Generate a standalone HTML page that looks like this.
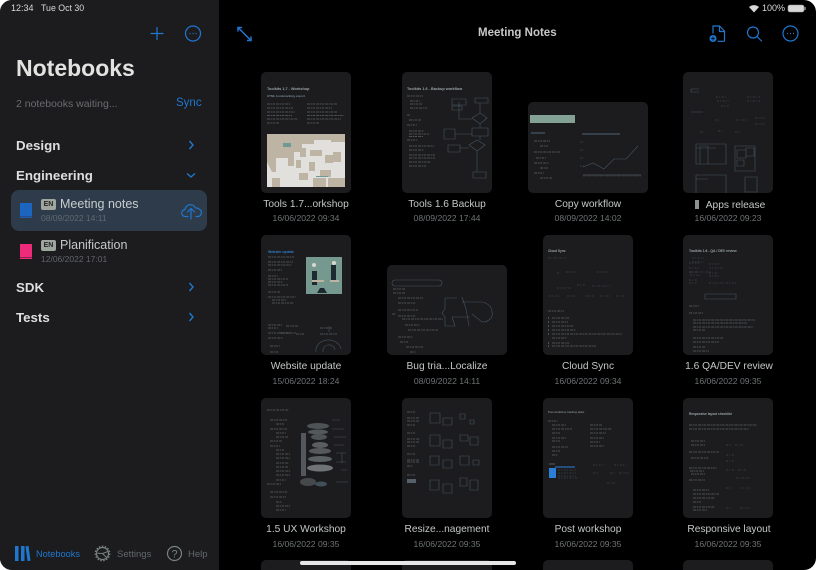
<!DOCTYPE html>
<html><head><meta charset="utf-8"><style>
html,body{margin:0;padding:0;background:#fff}
#s{position:relative;width:816px;height:570px;overflow:hidden;background:#000;border-radius:12px;font-family:"Liberation Sans",sans-serif}
#b{position:absolute;left:0;top:0;width:219px;height:570px;background:#1c1c1e}
.t{position:absolute;white-space:nowrap;line-height:1}
.h{font-weight:700;font-size:13.3px;color:#dedede;left:16px}
.sel{position:absolute;left:11px;top:190px;width:196px;height:41px;background:#2d3b4a;border-radius:8px}
.en{position:absolute;left:41px;width:15px;height:11px;background:#9ea69f;border-radius:2px;color:#222;font-size:7px;font-weight:700;line-height:11px;text-align:center}
.c{position:absolute;background:#1c1c1e;border-radius:5px}
.n{position:absolute;width:140px;text-align:center;color:#c4c8c8;font-size:10.2px;line-height:1;white-space:nowrap}
.d{position:absolute;width:140px;text-align:center;color:#6f7476;font-size:8.6px;line-height:1;white-space:nowrap}
svg{position:absolute;left:0;top:0}
svg text{font-family:"Liberation Sans",sans-serif}
.w{fill:none;stroke:#7a8486;stroke-width:.5;stroke-dasharray:3 .7 1.4 .6 2.4 1}
.f{fill:none;stroke:#455563;stroke-width:.6}
.g{fill:none;stroke:#4c575f;stroke-width:.5;stroke-dasharray:2 1.2 1 1.5}
.bl{fill:none;stroke:#1f77d0;stroke-width:1.2;stroke-linecap:round;stroke-linejoin:round}
#h{position:absolute;left:300px;top:561px;width:216px;height:4px;border-radius:2px;background:#e6e6e6}
</style></head><body><div id="s">
<div id="b"></div>
<div class="t" style="left:11px;top:4px;font-size:9px;color:#d8d8d8">12:34</div>
<div class="t" style="left:41px;top:4px;font-size:8.800px;color:#d8d8d8">Tue Oct 30</div>
<div class="t" style="left:16px;top:57px;font-size:23px;font-weight:700;color:#e2e2e0">Notebooks</div>
<div class="t" style="left:16px;top:99px;font-size:10.500px;color:#696c6f">2 notebooks waiting...</div>
<div class="t" style="left:176px;top:98px;font-size:11.500px;color:#1f77d0">Sync</div>
<div class="t h" style="top:139px">Design</div>
<div class="t h" style="top:169px">Engineering</div>
<div class="sel"></div>
<div class="en" style="top:199px">EN</div>
<div class="t" style="left:60px;top:198px;font-size:12.500px;color:#c9cdcd">Meeting notes</div>
<div class="t" style="left:41px;top:214px;font-size:8.500px;color:#616a70">08/09/2022 14:11</div>
<div class="en" style="top:240px">EN</div>
<div class="t" style="left:60px;top:239px;font-size:12.500px;color:#c4c8c8">Planification</div>
<div class="t" style="left:41px;top:255px;font-size:8.500px;color:#616467">12/06/2022 17:01</div>
<div class="t h" style="top:281px">SDK</div>
<div class="t h" style="top:311px">Tests</div>
<div class="t" style="left:36px;top:550px;font-size:9.200px;color:#1f77d0">Notebooks</div>
<div class="t" style="left:117px;top:550px;font-size:9.500px;color:#62686a">Settings</div>
<div class="t" style="left:188px;top:550px;font-size:9.500px;color:#62686a">Help</div>
<div class="t" style="left:762px;top:4px;font-size:9px;color:#d8d8d8">100%</div>
<div class="t" style="left:478px;top:28px;font-size:11.500px;font-weight:700;color:#c8c8c8">Meeting Notes</div>

<div class="c" style="left:261px;top:72px;width:90px;height:121px"></div>
<div class="c" style="left:402px;top:72px;width:90px;height:121px"></div>
<div class="c" style="left:528px;top:102px;width:120px;height:91px"></div>
<div class="c" style="left:683px;top:72px;width:90px;height:121px"></div>
<div class="c" style="left:261px;top:235px;width:90px;height:120px"></div>
<div class="c" style="left:387px;top:265px;width:120px;height:90px"></div>
<div class="c" style="left:543px;top:235px;width:90px;height:120px"></div>
<div class="c" style="left:683px;top:235px;width:90px;height:120px"></div>
<div class="c" style="left:261px;top:398px;width:90px;height:120px"></div>
<div class="c" style="left:402px;top:398px;width:90px;height:120px"></div>
<div class="c" style="left:543px;top:398px;width:90px;height:120px"></div>
<div class="c" style="left:683px;top:398px;width:90px;height:120px"></div>
<div class="c" style="left:261px;top:560px;width:90px;height:20px"></div>
<div class="c" style="left:402px;top:560px;width:90px;height:20px"></div>
<div class="c" style="left:543px;top:560px;width:90px;height:20px"></div>
<div class="c" style="left:683px;top:560px;width:90px;height:20px"></div>

<div class="n" style="left:236px;top:200px">Tools 1.7...orkshop</div><div class="d" style="left:236px;top:214px">16/06/2022 09:34</div>
<div class="n" style="left:377px;top:200px">Tools 1.6 Backup</div><div class="d" style="left:377px;top:214px">08/09/2022 17:44</div>
<div class="n" style="left:518px;top:200px">Copy workflow</div><div class="d" style="left:518px;top:214px">08/09/2022 14:02</div>
<div class="n" style="left:660px;top:200px"><span style="display:inline-block;width:4px;height:9px;background:#8d9490;margin-right:7px;vertical-align:-1px"></span>Apps release</div><div class="d" style="left:658px;top:214px">16/06/2022 09:23</div>
<div class="n" style="left:236px;top:362px">Website update</div><div class="d" style="left:236px;top:377px">15/06/2022 18:24</div>
<div class="n" style="left:377px;top:362px">Bug tria...Localize</div><div class="d" style="left:377px;top:377px">08/09/2022 14:11</div>
<div class="n" style="left:518px;top:362px">Cloud Sync</div><div class="d" style="left:518px;top:377px">16/06/2022 09:34</div>
<div class="n" style="left:659px;top:362px">1.6 QA/DEV review</div><div class="d" style="left:658px;top:377px">16/06/2022 09:35</div>
<div class="n" style="left:236px;top:525px">1.5 UX Workshop</div><div class="d" style="left:236px;top:540px">16/06/2022 09:35</div>
<div class="n" style="left:377px;top:525px">Resize...nagement</div><div class="d" style="left:377px;top:540px">16/06/2022 09:35</div>
<div class="n" style="left:518px;top:525px">Post workshop</div><div class="d" style="left:518px;top:540px">16/06/2022 09:35</div>
<div class="n" style="left:659px;top:525px">Responsive layout</div><div class="d" style="left:658px;top:540px">16/06/2022 09:35</div>

<svg width="816" height="570" viewBox="0 0 816 570">
<path class="bl" d="M151 33.500H163M157 27.500V39.500"/>
<circle class="bl" cx="193" cy="33.500" r="7.500"/><path d="M189.500 33.500h1M192.500 33.500h1M195.500 33.500h1" stroke="#1f77d0" stroke-width="1.200"/>
<path d="M189.500 141l3.500 4-3.500 4" fill="none" stroke="#1f77d0" stroke-width="1.400"/>
<path d="M187 173.500l4 3.500 4-3.500" fill="none" stroke="#1f77d0" stroke-width="1.400"/>
<path d="M189.500 283l3.500 4-3.500 4" fill="none" stroke="#1f77d0" stroke-width="1.400"/>
<path d="M189.500 313l3.500 4-3.500 4" fill="none" stroke="#1f77d0" stroke-width="1.400"/>
<rect x="20" y="203" width="12" height="13" fill="#1a66c4"/><rect x="20" y="216.500" width="12" height="1.300" fill="#1a66c4"/>
<path d="M25 205v9M27 205v9M29 205v9" stroke="#2f5f9a" stroke-width=".9" stroke-dasharray="1 1"/>
<rect x="20" y="244" width="12" height="13" fill="#ee2a7b"/><rect x="20" y="257.500" width="12" height="1.500" fill="#ee2a7b"/>
<path class="bl" d="M188 216.500h-2.500a3.500 3.500 0 0 1-.5-7 5.500 5.500 0 0 1 10.500-1.500 4.500 4.500 0 0 1 3.500 1 4 4 0 0 1-.5 7.500H196M191 219v-10M187.500 212l3.500-3.500 3.500 3.500"/>
<path d="M15 546h3.500v15H15zM21 546h3.500v15H21z" fill="#1f77d0"/><path d="M25.500 546.500l3-.8 2 15-3 .3z" fill="#1f77d0"/>
<circle cx="102.500" cy="553.500" r="6" fill="none" stroke="#75827f" stroke-width="1.200"/>
<circle cx="102.500" cy="553.500" r="7.200" fill="none" stroke="#75827f" stroke-width="1.400" stroke-dasharray="1.500 1.500"/>
<path d="M102.500 553.500l5.500-2M102.500 553.500l4 4M102.500 553.500l-5-.2" stroke="#75827f" fill="none"/>
<circle cx="174.500" cy="553.500" r="7" fill="none" stroke="#75827f" stroke-width="1.200"/>
<text x="174.500" y="557.500" font-size="11" fill="#75827f" text-anchor="middle">?</text>
<path d="M749 7a7.500 7.500 0 0 1 10 0l-5 5.500z" fill="#d8d8d8"/>
<rect x="788" y="5" width="16" height="7" rx="2" fill="#d8d8d8" stroke="#999" stroke-width=".6"/><rect x="804.500" y="7" width="1.200" height="3" fill="#999"/>
<path d="M238 31.500v-4h4M238.500 28l12 12M251 36.500v4h-4" fill="none" stroke="#1f77d0" stroke-width="1.500"/>
<path class="bl" d="M713 33V26h6.500l5 5v9.500a.8.8 0 0 1-.8.8H718M719.500 26v5.500h5"/>
<circle cx="713" cy="38.500" r="3.500" fill="#1f77d0"/><path d="M711 38.500h4M713 36.500v4" stroke="#000" stroke-width=".8"/>
<circle class="bl" cx="753" cy="32.500" r="5.500"/><path class="bl" d="M757 36.500l4.500 4.500"/>
<circle class="bl" cx="790.500" cy="33.500" r="7.500"/><path d="M787 33.500h1M790 33.500h1M793 33.500h1" stroke="#1f77d0" stroke-width="1.200"/>

<text x="267" y="90" font-size="3.800" font-weight="700" fill="#9aa5a5">Toolkits 1.7 - Workshop</text>
<text x="267" y="97" font-size="3" font-weight="700" fill="#6e8a96">HTML bookmarking export</text>
<path class="w" d="M267 104h24M267 108h26M267 112h28M267 115.500h25M267 119h31M267 123h12M307 104h30M307 108h25M307 112h30M307 115.500h37M307 119h34M307 123h12"/>
<rect x="267" y="134" width="78" height="53" fill="#e2e0dc"/>
<path d="M267 134h78v8h-14v-2h-17v4h-12v8h-8v14h-6v-8h-12v14h-4l-5-10z" fill="#bdb4a3"/>
<path d="M300 148h6v9h-6zM296 160h5v8h-5zM310 150h12v6h-12zM325 155h8v8h-8zM309 162h6v9h-6zM320 170h11v7h-11zM333 152h8v10h-8zM299 173h9v7h-9zM328 178h17v9h-17zM272 178h8v9h-8zM313 178h13v9h-13z" fill="#bdb4a3"/>
<path d="M283 143h8v4h-8zM316 176h12v1h-12z" fill="#6d9a92"/>
<text x="407" y="90" font-size="3.800" font-weight="700" fill="#9aa5a5">Toolkits 1.6 - Backup workflow</text>
<path class="w" d="M407 96h16M410 101h10M410 104h12M410 108h18M407 115h3M409 120h12M407 125h10M409 131h15M409 134h20M409 136.500h14M407 140h10M409 146h25M409 150h15M409 155h26M409 158h26M409 162h22M409 166h17"/>
<path class="f" d="M452 99h14v6h-14zM475 98h13v5h-13zM452 106h10v4h-10zM472 118l8-5 7 5-7 6zM444 129h11v10h-11zM472 128h16v8h-16zM469 145l8-5 8 5-8 6zM448 145h12v7h-12zM473 172h13v6h-13zM459 102v17h13M480 103v10M480 124v4M480 136v4M455 134h17M460 148h9M477 151v21"/>
<rect x="530" y="115" width="45" height="8" fill="#84a196"/>
<path d="M531 133h14M582 134h38" fill="none" stroke="#5f7d92" stroke-width=".7"/>
<path class="w" d="M534 141h16M540 146h8M534 152h26M536 158h10M534 163h15M540 168h8M534 173h10M540 178h12"/>
<path class="f" d="M583 167l10-4 11 6 10-10 12 0 12-13"/>
<path d="M583 175h58" stroke="#68737a" stroke-width=".6"/>
<path class="g" d="M580 142h4M580 150h4M580 158h4M580 166h4M583 176h58"/>
<path class="f" d="M691 89h8M691 92h8M691 89v3M691 112h12"/>
<path class="g" d="M716 97h10M717 101h12M747 97h13M747 101h13M721 106h8M715 120h6M736 120h12M755 118h10M755 124h10M700 132h4M718 131h4M735 132h6"/>
<path class="f" d="M696 144h30v20h-30zM696 148h20M700 146h8v18h-8zM735 146h20v25h-20zM737 150h9v8h-9zM737 160h7v6h-7zM746 148h8v8h-8zM696 175h30v18M696 175v18M696 179h12M745 177h12v15h-12z"/>
<text x="268" y="253" font-size="3.500" font-weight="700" fill="#2f7cc8">Website update</text>
<path class="w" d="M268 257h26M268 262h25M268 265h24M268 270h14M268 276h10M268 279h20M268 282h15M268 285h20M268 292h12M268 297h28M272 300h15M272 303h22"/>
<rect x="306" y="257" width="36" height="37" fill="#75998f"/>
<path d="M312 271h5v14h-5zM331 265h5v15h-5z" fill="#1d2a30"/><circle cx="314" cy="265" r="2" fill="#d9d6cf"/><circle cx="334" cy="263" r="2" fill="#d9d6cf"/>
<path d="M320 288h4l3 5h-10z" fill="#1d2a30"/><rect x="312" y="280" width="12" height="2" fill="#bdb4a3"/><rect x="330" y="280" width="9" height="2" fill="#bdb4a3"/>
<path class="w" d="M268 325h14M268 328h10M286 326h12M268 333h22M268 338h15M270 346h10M270 352h8M280 333h16M320 328h12M320 334h17M296 334h8"/>
<path class="f" d="M316 352a12 10 0 0 1 25-3M323 352a6 6 0 0 1 12-2M329 326v6"/>
<path class="w" d="M393 289h12M393 293h12M398 298h25M398 303h18M398 310h20M398 316h18M392 314h4M402 319h41M405 325h15M408 330h30M398 337h15M400 342h8M406 347h18M410 352h6"/>
<rect x="392" y="280" width="50" height="6" rx="3" class="f"/>
<path class="f" d="M445 298h12M445 298v11l-3 4 3 4v9h10l-3-9h18M462 297l4 12 3 17M462 302h18a12 10 0 0 1 12 10 10 8 0 0 1-10 10l-10-8"/>
<text x="548" y="252" font-size="3.200" font-weight="700" fill="#9aa5a5">Cloud Sync</text>
<path class="g" d="M548 258h18M566 272h10M597 272h12M557 273h2M557 288h14M577 285h8M592 286h18M549 296h10M567 296h8M586 296h8M600 296h10M616 296h8"/>
<path class="w" d="M548 311h16M552 318h18M552 322h16M552 326h22M552 330h24M552 334h70M552 338h15M552 346h44M552 343h18"/>
<path d="M548 318h1M548 322h1M548 326h1M548 330h1M548 334h1M548 343h1M548 346h1" stroke="#7a8486"/>
<text x="689" y="252" font-size="3.400" font-weight="700" fill="#9aa5a5">Toolkits 1.6 - QA / DEV review</text>
<path class="g" d="M692 258h12M692 262h12M689 263h10M689 268h10M689 272h22M709 264h12M709 268h14M690 272h8M690 275h10M709 273h9M709 276h11M689 280h8M689 283h8M709 283h28"/>
<path class="f" d="M705 294h31v5h-31z"/>
<path class="w" d="M689 306h10M689 313h14M693 320h62M693 323h55M693 327h60M693 330h12M693 338h30M693 342h26M693 347h12M693 351h16"/>
<path class="w" d="M267 410h22M270 420h17M276 424h8M270 429h17M276 433h10M276 437h12M270 441h12M270 446h10M276 450h8M276 454h14M276 458h14M276 463h13M276 467h12M276 471h14M276 475h14M276 480h10M267 484h14M270 492h18M270 497h16M276 502h6M276 506h14M276 510h10"/>
<rect x="301" y="433" width="5" height="43" fill="#54585c"/>
<ellipse cx="318" cy="426" rx="11" ry="3" fill="#4e5356"/><ellipse cx="318" cy="432" rx="10" ry="2.500" fill="#53585b"/><ellipse cx="319" cy="437" rx="8" ry="3" fill="#4e5356"/><ellipse cx="320" cy="445" rx="8" ry="3" fill="#5a5e61"/><ellipse cx="320" cy="451" rx="11" ry="3" fill="#55595c"/><ellipse cx="320" cy="459" rx="12" ry="3" fill="#5b6063"/><ellipse cx="320" cy="468" rx="13" ry="3.500" fill="#707375"/><ellipse cx="308" cy="482" rx="8" ry="4" fill="#46494c"/><ellipse cx="321" cy="484" rx="6" ry="2.500" fill="#3f5058"/>
<path class="f" d="M332 420h8M332 429h12M334 437h12M334 445h10M336 453h10M336 462h10M342 453v10M341 470h6M336 482h12"/>
<path class="w" d="M407 412h9M407 418h12M407 421h12M407 425h8M407 433h9M407 439h13M407 442h12M407 446h8M407 454h9M407 460h12M407 462h12M407 466h6M407 475h9"/>
<rect x="407" y="479" width="9" height="4" fill="#55606b"/>
<path class="f" d="M430 413h10v10h-10zM443 418h9v7h-9zM460 414h5v5h-5zM470 420h4v4h-4zM430 435h10v11h-10zM443 440h9v8h-9zM460 435h8v6h-8zM470 437h8v8h-8zM430 456h9v9h-9zM443 460h9v8h-9zM460 456h9v9h-9zM473 460h6v5h-6zM430 480h9v10h-9zM443 484h9v9h-9zM460 478h7v8h-7zM470 480h8v10h-8z"/>
<text x="548" y="413" font-size="2.800" fill="#9aa5a5">Post workshop tracking tasks</text>
<path class="w" d="M548 421h10M552 425h14M552 429h20M552 433h8M552 438h14M552 441h8M552 447h16M552 451h8M552 455h6M590 425h12M590 429h22M590 433h16M590 438h14M590 442h10M590 446h14"/>
<path d="M549 464h6" stroke="#79868e" stroke-width=".6"/>
<rect x="549" y="468" width="7" height="10" fill="#2a80d8"/><rect x="555" y="466.500" width="20" height="1" fill="#2a80d8"/>
<path class="g" d="M558 470h18M558 473h18M558 476h18M558 478h20M593 465h12M614 465h12M593 473h6M610 473h6M619 473h10M607 483h8"/>
<text x="689" y="415" font-size="3.200" font-weight="700" fill="#9aa5a5">Responsive layout checklist</text>
<path class="w" d="M689 425h68M689 429h60M691 441h14M691 445h14M689 452h30M691 458h18M689 468h28M690 471h14M691 474h14M689 480h16M693 490h16M693 494h26M693 498h22M693 502h8M693 507h22M693 510h14"/>
<path class="g" d="M726 445h6M735 445h8M726 455h8M726 461h8M726 470h8M738 470h8M736 478h14M726 488h6M740 488h10M726 508h6M740 508h10"/>
</svg>
<div id="h"></div>
</div></body></html>
